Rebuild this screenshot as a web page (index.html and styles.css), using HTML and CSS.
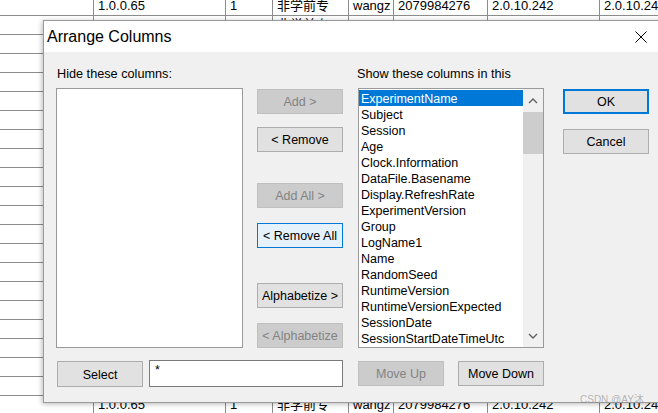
FILE: index.html
```html
<!DOCTYPE html>
<html>
<head>
<meta charset="utf-8">
<link rel="stylesheet" href="styles.css">
</head>
<body>
<div class="sheet">
  <div class="row"><span></span><span>1.0.0.65</span><span>1</span><span>非学前专</span><span>wangz</span><span>2079984276</span><span>2.0.10.242</span><span>2.0.10.242</span></div>
  <div class="row"><span></span><span>1.0.0.65</span><span>1</span><span>非学前专</span><span>wangz</span><span>2079984276</span><span>2.0.10.242</span><span>2.0.10.242</span></div>
  <div class="row"><span></span><span></span><span></span><span></span><span></span><span></span><span></span><span></span></div>
  <div class="row"><span></span><span></span><span></span><span></span><span></span><span></span><span></span><span></span></div>
  <div class="row"><span></span><span></span><span></span><span></span><span></span><span></span><span></span><span></span></div>
  <div class="row"><span></span><span></span><span></span><span></span><span></span><span></span><span></span><span></span></div>
  <div class="row"><span></span><span></span><span></span><span></span><span></span><span></span><span></span><span></span></div>
  <div class="row"><span></span><span></span><span></span><span></span><span></span><span></span><span></span><span></span></div>
  <div class="row"><span></span><span></span><span></span><span></span><span></span><span></span><span></span><span></span></div>
  <div class="row"><span></span><span></span><span></span><span></span><span></span><span></span><span></span><span></span></div>
  <div class="row"><span></span><span></span><span></span><span></span><span></span><span></span><span></span><span></span></div>
  <div class="row"><span></span><span></span><span></span><span></span><span></span><span></span><span></span><span></span></div>
  <div class="row"><span></span><span></span><span></span><span></span><span></span><span></span><span></span><span></span></div>
  <div class="row"><span></span><span></span><span></span><span></span><span></span><span></span><span></span><span></span></div>
  <div class="row"><span></span><span></span><span></span><span></span><span></span><span></span><span></span><span></span></div>
  <div class="row"><span></span><span></span><span></span><span></span><span></span><span></span><span></span><span></span></div>
  <div class="row"><span></span><span></span><span></span><span></span><span></span><span></span><span></span><span></span></div>
  <div class="row"><span></span><span></span><span></span><span></span><span></span><span></span><span></span><span></span></div>
  <div class="row"><span></span><span></span><span></span><span></span><span></span><span></span><span></span><span></span></div>
  <div class="row"><span></span><span></span><span></span><span></span><span></span><span></span><span></span><span></span></div>
  <div class="row"><span></span><span></span><span></span><span></span><span></span><span></span><span></span><span></span></div>
  <div class="row"><span></span><span>1.0.0.65</span><span>1</span><span>非学前专</span><span>wangz</span><span>2079984276</span><span>2.0.10.242</span><span>2.0.10.242</span></div>
</div>

<div class="dialog">
  <div class="titlebar">
    <span class="title">Arrange Columns</span>
    <svg class="close" width="12" height="12" viewBox="0 0 12 12"><path d="M0.5 0.5 L11.5 11.5 M11.5 0.5 L0.5 11.5" stroke="#000" stroke-width="1" fill="none"/></svg>
  </div>
  <div class="content">
    <div class="main">
      <div class="col col-hide">
        <div class="label">Hide these columns:</div>
        <div class="listbox"></div>
      </div>
      <div class="col col-mid">
        <button class="btn disabled b-add">Add &gt;</button>
        <button class="btn b-remove">&lt; Remove</button>
        <button class="btn disabled b-addall">Add All &gt;</button>
        <button class="btn focused b-removeall">&lt; Remove All</button>
        <button class="btn b-alpha">Alphabetize &gt;</button>
        <button class="btn disabled b-unalpha">&lt; Alphabetize</button>
      </div>
      <div class="col col-show">
        <div class="label label-show">Show these columns in this</div>
        <div class="list">
          <div class="items">
            <div class="item selected">ExperimentName</div>
            <div class="item">Subject</div>
            <div class="item">Session</div>
            <div class="item">Age</div>
            <div class="item">Clock.Information</div>
            <div class="item">DataFile.Basename</div>
            <div class="item">Display.RefreshRate</div>
            <div class="item">ExperimentVersion</div>
            <div class="item">Group</div>
            <div class="item">LogName1</div>
            <div class="item">Name</div>
            <div class="item">RandomSeed</div>
            <div class="item">RuntimeVersion</div>
            <div class="item">RuntimeVersionExpected</div>
            <div class="item">SessionDate</div>
            <div class="item">SessionStartDateTimeUtc</div>
          </div>
          <div class="scrollbar">
            <div class="arrow"><svg width="10" height="8" viewBox="0 0 10 8"><path d="M1 6 L5 2 L9 6" stroke="#606060" stroke-width="1.4" fill="none"/></svg></div>
            <div class="thumb"></div>
            <div class="track"></div>
            <div class="arrow"><svg width="10" height="8" viewBox="0 0 10 8"><path d="M1 2 L5 6 L9 2" stroke="#606060" stroke-width="1.4" fill="none"/></svg></div>
          </div>
        </div>
      </div>
      <div class="col col-ok">
        <button class="btn default b-ok">OK</button>
        <button class="btn b-cancel">Cancel</button>
      </div>
    </div>
    <div class="bottom">
      <button class="btn b-select">Select</button>
      <div class="textbox">*</div>
      <button class="btn disabled b-moveup">Move Up</button>
      <button class="btn b-movedown">Move Down</button>
    </div>
  </div>
</div>

<span class="watermark">CSDN @AY沐</span>
</body>
</html>
```

FILE: styles.css
```css
html, body {
  margin: 0;
  padding: 0;
}
body {
  width: 658px;
  height: 413px;
  overflow: hidden;
  position: relative;
  background: #ffffff;
  font-family: "Liberation Sans", "Noto Sans CJK SC", sans-serif;
  color: #000;
}

/* background grid */
.sheet {
  margin-top: -3px;
}
.row {
  display: grid;
  grid-template-columns: 93px 132px 47px 76px 45px 94px 112px 1fr;
  height: 19px;
  box-sizing: border-box;
  border-bottom: 1px solid #8c8c8c;
  font-size: 13px;
  line-height: 18px;
}
.row span {
  padding-left: 4px;
  white-space: nowrap;
  overflow: hidden;
  border-left: 1px solid #8c8c8c;
}
.row span:first-child {
  border-left: none;
}

/* dialog */
.dialog {
  position: absolute;
  left: 43px;
  top: 20px;
  width: 630px;
  height: 383px;
  box-sizing: border-box;
  border: 1px solid #9a9a9a;
  box-shadow: -1px 1px 5px rgba(0, 0, 0, 0.28);
  background: #f0f0f0;
  display: flex;
  flex-direction: column;
}
.titlebar {
  height: 31px;
  background: #ffffff;
  display: flex;
  align-items: center;
  justify-content: space-between;
  padding-left: 3px;
  padding-right: 25px;
}
.title {
  font-size: 16px;
}
.close {
  display: block;
}
.content {
  flex: 1;
  padding: 14px 0 0 12px;
  font-size: 12.5px;
}
.main {
  display: flex;
  align-items: flex-start;
}
.col {
  display: flex;
  flex-direction: column;
}
.col-hide {
  width: 187px;
}
.col-mid {
  width: 86px;
  margin-left: 14px;
  padding-top: 22px;
}
.col-show {
  width: 186px;
  margin-left: 15px;
}
.col-ok {
  width: 86px;
  margin-left: 19px;
  padding-top: 22px;
}
.label {
  height: 17px;
  line-height: 17px;
  margin-bottom: 5px;
  padding-left: 1px;
  font-size: 12.7px;
  white-space: nowrap;
}
.label-show {
  padding-left: 0;
  margin-left: -1px;
}
.listbox {
  height: 260px;
  box-sizing: border-box;
  background: #fff;
  border: 1px solid #9a9a9a;
}

/* buttons */
.btn {
  display: flex;
  align-items: center;
  justify-content: center;
  box-sizing: border-box;
  height: 25px;
  width: 86px;
  padding: 1px 0 0 0;
  margin: 0;
  font: inherit;
  color: #000;
  background: #e1e1e1;
  border: 1px solid #adadad;
  white-space: nowrap;
}
.btn.disabled {
  background: #cccccc;
  border-color: #bfbfbf;
  color: #838383;
}
.btn.focused {
  background: #e5f1fb;
  border-color: #0078d7;
}
.btn.default {
  border: 2px solid #0078d7;
}
.b-add { margin-top: 1px; }
.b-remove { margin-top: 13px; }
.b-addall { margin-top: 31px; }
.b-removeall { margin-top: 15px; }
.b-alpha { margin-top: 35px; }
.b-unalpha { margin-top: 15px; }
.b-ok { margin-top: 1px; }
.b-cancel { margin-top: 15px; }

/* right list */
.list {
  height: 260px;
  box-sizing: border-box;
  background: #fff;
  border: 1px solid #9a9a9a;
  display: flex;
  overflow: hidden;
}
.items {
  flex: 1;
  padding-top: 1px;
  overflow: hidden;
}
.item {
  height: 16px;
  line-height: 18px;
  padding-left: 2px;
  white-space: nowrap;
}
.item.selected {
  background: #0078d7;
  color: #fff;
}
.scrollbar {
  width: 20px;
  background: #f0f0f0;
  display: flex;
  flex-direction: column;
}
.arrow {
  height: 23px;
  display: flex;
  align-items: center;
  justify-content: center;
}
.thumb {
  height: 42px;
  background: #cdcdcd;
}
.track {
  flex: 1;
}

/* bottom row */
.bottom {
  display: flex;
  align-items: flex-start;
  margin-top: 12px;
}
.b-select {
  margin-top: 1px;
  margin-left: 1px;
  height: 26px;
}
.textbox {
  width: 194px;
  height: 27px;
  box-sizing: border-box;
  margin-left: 6px;
  background: #fff;
  border: 1px solid #7a7a7a;
  padding: 2px 0 0 5px;
  line-height: 15px;
}
.b-moveup {
  margin-top: 1px;
  margin-left: 15px;
}
.b-movedown {
  margin-top: 1px;
  margin-left: 14px;
}

.watermark {
  position: absolute;
  left: 580px;
  top: 391px;
  font-size: 10px;
  color: rgba(130, 130, 130, 0.55);
  white-space: nowrap;
}
```
